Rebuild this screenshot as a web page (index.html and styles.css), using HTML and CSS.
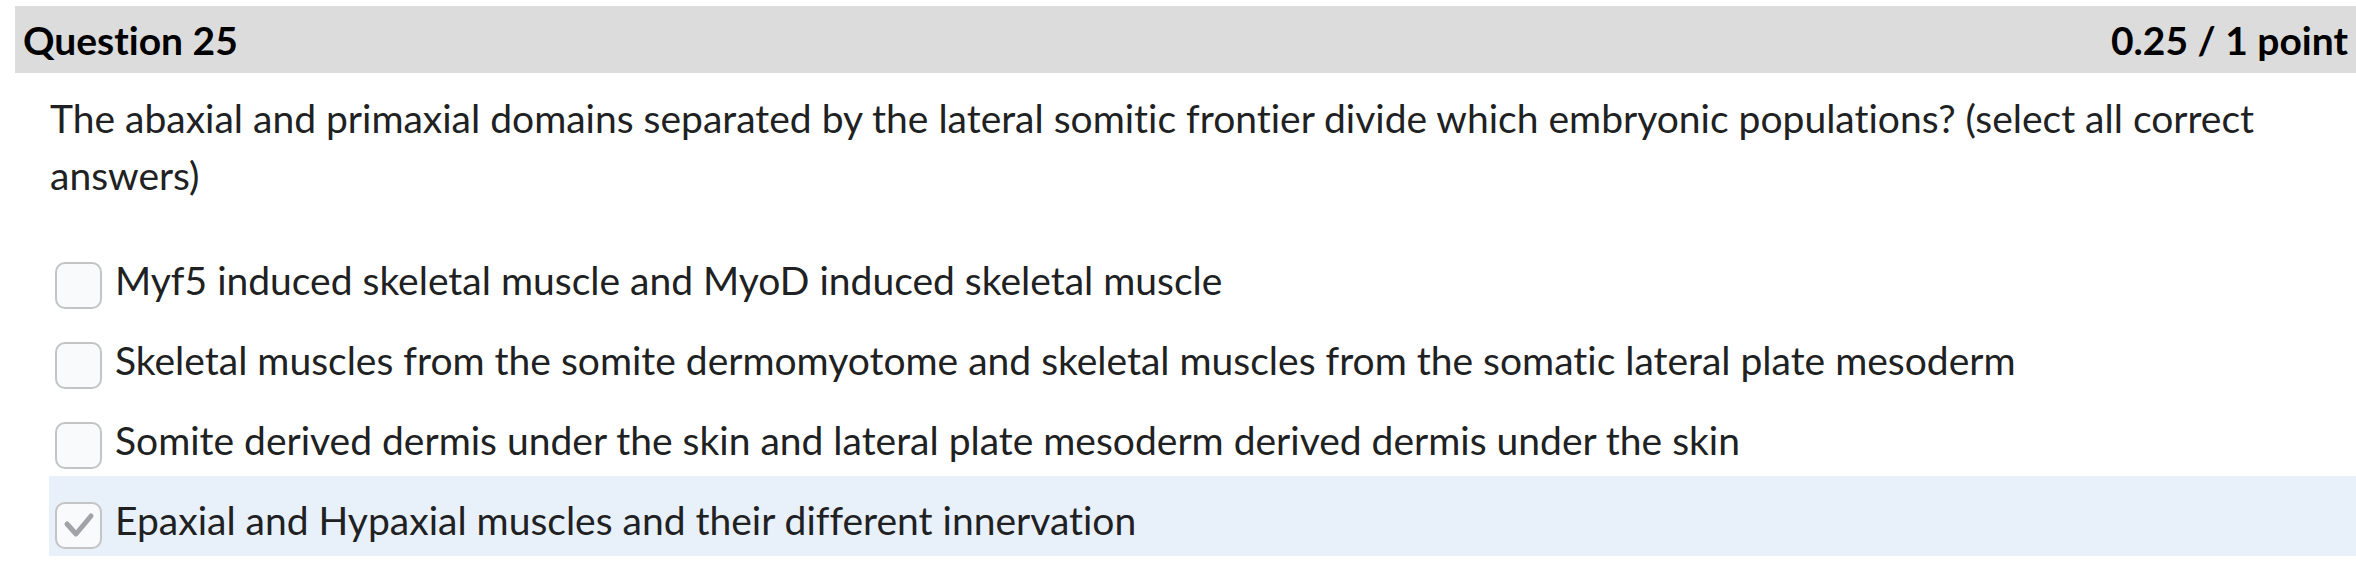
FILE: index.html
```html
<!DOCTYPE html>
<html lang="en">
<head>
    <meta charset="UTF-8">
    <title>Question 25</title>
    <link rel="stylesheet" href="styles.css">
</head>
<body>
    <div class="question">
        <div class="question-header">
            <h2>Question 25</h2>
            <span class="score">0.25 / 1 point</span>
        </div>

        <p class="question-text">The abaxial and primaxial domains separated by the lateral somitic frontier divide which embryonic populations? (select all correct answers)</p>

        <ul class="choices">
            <li class="choice">
                <span class="box"></span>
                <span class="label">Myf5 induced skeletal muscle and MyoD induced skeletal muscle</span>
            </li>
            <li class="choice">
                <span class="box"></span>
                <span class="label">Skeletal muscles from the somite dermomyotome and skeletal muscles from the somatic lateral plate mesoderm</span>
            </li>
            <li class="choice">
                <span class="box"></span>
                <span class="label">Somite derived dermis under the skin and lateral plate mesoderm derived dermis under the skin</span>
            </li>
            <li class="choice selected">
                <span class="box">
                    <svg viewBox="0 0 43 43" width="43" height="43"><path d="M10 20l9 10L34 12" fill="none" stroke="#a0a3a8" stroke-width="5" stroke-linecap="round" stroke-linejoin="round"/></svg>
                </span>
                <span class="label">Epaxial and Hypaxial muscles and their different innervation</span>
            </li>
        </ul>
    </div>
</body>
</html>
```

FILE: styles.css
```css
body {
    margin: 0;
    font-family: Lato, "Open Sans", sans-serif;
    font-variant-ligatures: none;
    color: #202122;
    background: #fff;
}

.question {
    padding-top: 6px;
}

.question-header {
    display: flex;
    justify-content: space-between;
    align-items: center;
    height: 67px;
    margin-left: 15px;
    padding: 0 8px;
    background: #dcdcdc;
    font-size: 39px;
    font-weight: bold;
    color: #000;
}

.question-header h2 {
    margin: 0;
    font-size: inherit;
}

.question-text {
    margin: 17px 0 0 50px;
    font-size: 39px;
    line-height: 57px;
}

.choices {
    list-style: none;
    margin: 32px 0 0 49px;
    padding: 0;
}

.choice {
    display: flex;
    align-items: flex-start;
    gap: 13px;
    height: 80px;
    padding: 20px 0 0 6px;
    box-sizing: border-box;
    font-size: 39px;
    line-height: 1.2;
}

.choice.selected {
    background: #e8f0fa;
}

.box {
    display: block;
    width: 43px;
    height: 43px;
    margin-top: 6px;
    border: 2px solid #c3c4c6;
    border-radius: 10px;
    background: #f9fafc;
    flex-shrink: 0;
}

.box svg {
    display: block;
}

.label {
    margin-top: 1px;
}
```
